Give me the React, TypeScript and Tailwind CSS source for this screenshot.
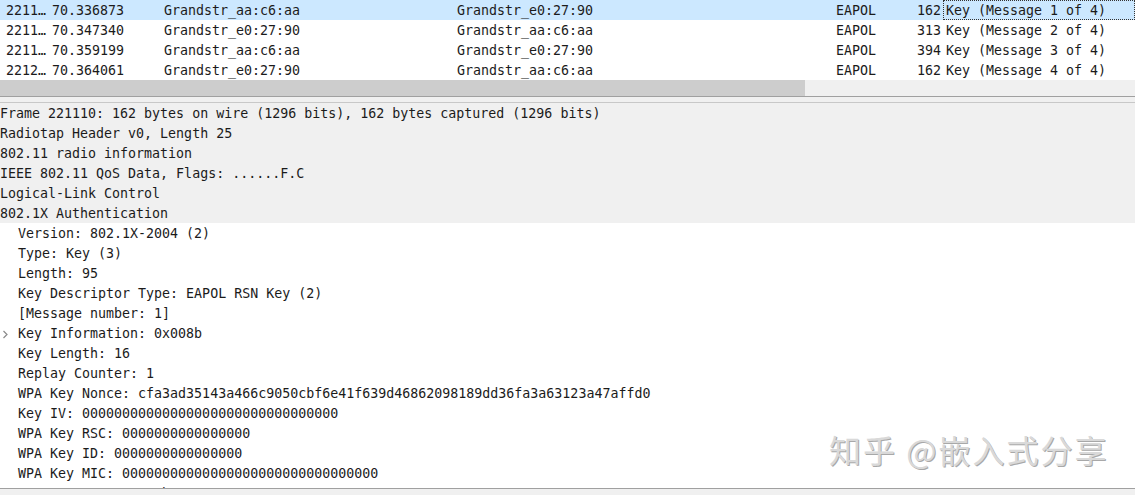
import React from "react";

const packets = [
  { no: "2211…", time: "70.336873", src: "Grandstr_aa:c6:aa", dst: "Grandstr_e0:27:90", proto: "EAPOL", len: "162", info: "Key (Message 1 of 4)" },
  { no: "2211…", time: "70.347340", src: "Grandstr_e0:27:90", dst: "Grandstr_aa:c6:aa", proto: "EAPOL", len: "313", info: "Key (Message 2 of 4)" },
  { no: "2211…", time: "70.359199", src: "Grandstr_aa:c6:aa", dst: "Grandstr_e0:27:90", proto: "EAPOL", len: "394", info: "Key (Message 3 of 4)" },
  { no: "2212…", time: "70.364061", src: "Grandstr_e0:27:90", dst: "Grandstr_aa:c6:aa", proto: "EAPOL", len: "162", info: "Key (Message 4 of 4)" },
];

const top = [
  "Frame 221110: 162 bytes on wire (1296 bits), 162 bytes captured (1296 bits)",
  "Radiotap Header v0, Length 25",
  "802.11 radio information",
  "IEEE 802.11 QoS Data, Flags: ......F.C",
  "Logical-Link Control",
  "802.1X Authentication",
];

const children: { t: string; arrow?: boolean }[] = [
  { t: "Version: 802.1X-2004 (2)" },
  { t: "Type: Key (3)" },
  { t: "Length: 95" },
  { t: "Key Descriptor Type: EAPOL RSN Key (2)" },
  { t: "[Message number: 1]" },
  { t: "Key Information: 0x008b", arrow: true },
  { t: "Key Length: 16" },
  { t: "Replay Counter: 1" },
  { t: "WPA Key Nonce: cfa3ad35143a466c9050cbf6e41f639d46862098189dd36fa3a63123a47affd0" },
  { t: "Key IV: 00000000000000000000000000000000" },
  { t: "WPA Key RSC: 0000000000000000" },
  { t: "WPA Key ID: 0000000000000000" },
  { t: "WPA Key MIC: 00000000000000000000000000000000" },
  { t: "WPA Key Data Length: 22" },
];

export default function App() {
  return (
    <div
      className="relative w-[1135px] h-[495px] overflow-hidden bg-white text-[#1b1b1b] text-[13.3px] leading-[22px] whitespace-pre"
      style={{ fontFamily: '"DejaVu Sans Mono", "Liberation Mono", monospace' }}
    >
      {/* packet list */}
      <div className="h-[80px]">
        {packets.map((p, i) => (
          <div key={i} className={`flex h-[20px] overflow-hidden ${i === 0 ? "bg-[#cce8ff]" : "bg-white"}`}>
            <div className="w-[52px] pl-[6px]">{p.no}</div>
            <div className="w-[112px]">{p.time}</div>
            <div className="w-[293px]">{p.src}</div>
            <div className="w-[379px]">{p.dst}</div>
            <div className="w-[81px]">{p.proto}</div>
            <div className="w-[24px] text-right">{p.len}</div>
            <div
              className={`flex-1 h-[20px] pl-[2px] ml-[2px] leading-[20px] ${
                i === 0 ? "border border-dotted border-[#333]" : "border border-transparent"
              }`}
            >
              {p.info}
            </div>
          </div>
        ))}
      </div>
      {/* horizontal scrollbar */}
      <div className="flex h-[16px] bg-[#f0f0f0]">
        <div className="w-[805px] bg-[#cdcdcd]" />
      </div>
      <div className="h-px bg-[#a0a0a0]" />
      <div className="h-[5px] bg-[#f0f0f0]" />
      <div className="h-px bg-[#c8c8c8]" />
      {/* details */}
      <div className="h-[385px] overflow-hidden">
        {top.map((t, i) => (
          <div key={i} className="h-[20px] overflow-hidden bg-[#f0f0f0]">
            {t}
          </div>
        ))}
        {children.map((c, i) => (
          <div key={i} className="relative h-[20px] overflow-hidden pl-[18px]">
            {c.arrow && (
              <svg className="absolute left-[2px] top-[7px]" width="7" height="9" viewBox="0 0 7 9">
                <path d="M1.5 1 L5 4.5 L1.5 8" fill="none" stroke="#8a8a8a" strokeWidth="1.2" />
              </svg>
            )}
            {c.t}
          </div>
        ))}
      </div>
      <div className="h-px bg-[#a0a0a0]" />
      <div className="h-[6px] bg-[#f0f0f0]" />

      {/* watermark */}
      <div
        className="absolute left-[829px] top-[429px] text-[32px] leading-[40px] text-[#d9d9d9] tracking-[2px]"
        style={{
          fontFamily: '"Noto Sans CJK SC", "Noto Sans", sans-serif',
          textShadow: "1px 1px 0 #a8a8a8",
        }}
      >
        知乎 @嵌入式分享
      </div>
    </div>
  );
}
